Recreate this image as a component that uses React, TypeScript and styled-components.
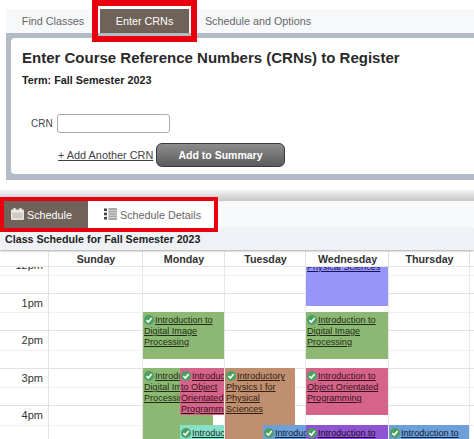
import styled, { createGlobalStyle } from "styled-components";

const GlobalStyle = createGlobalStyle`
  html, body {
    margin: 0;
    padding: 0;
    background: #fff;
    font-family: "Liberation Sans", Arial, sans-serif;
  }
`;

const Page = styled.div`
  position: relative;
  width: 474px;
  height: 439px;
  overflow: hidden;
`;

const Register = styled.section`
  padding: 9px 0 0 6px;
`;

const TabStrip = styled.nav`
  display: flex;
  height: 24px;
  background: #f7f8fa;
`;

const TopTab = styled.div<{ $active?: boolean; $width: number }>`
  width: ${(p) => p.$width}px;
  display: flex;
  align-items: center;
  justify-content: center;
  font-size: 10.8px;
  color: ${(p) => (p.$active ? "#fff" : "#666")};
  background: ${(p) => (p.$active ? "#6e6259" : "transparent")};
`;

const RedBox = styled.div<{ $x: number; $y: number; $w: number; $h: number; $b: number }>`
  position: absolute;
  left: ${(p) => p.$x}px;
  top: ${(p) => p.$y}px;
  width: ${(p) => p.$w}px;
  height: ${(p) => p.$h}px;
  box-sizing: border-box;
  border: ${(p) => p.$b}px solid #e8000f;
  pointer-events: none;
`;

const PanelFrame = styled.div`
  height: 147px;
  box-sizing: border-box;
  padding: 5px 0 6px 5px;
  background: #b3bcc6;
`;

const Panel = styled.div`
  height: 100%;
  box-sizing: border-box;
  padding: 11px 0 0 11px;
  background: #fff;
  border-radius: 4px 0 0 4px;
`;

const Heading = styled.h1`
  margin: 0;
  font-size: 15px;
  line-height: 18px;
  font-weight: 700;
  color: #2a2a2a;
`;

const Term = styled.div`
  margin-top: 6px;
  font-size: 10.8px;
  line-height: 14px;
  font-weight: 700;
  color: #222;
`;

const CrnRow = styled.div`
  display: flex;
  align-items: center;
  gap: 4px;
  margin-top: 27px;
  padding-left: 9px;
  font-size: 10px;
  color: #444;
`;

const CrnInput = styled.input`
  width: 113px;
  height: 19px;
  box-sizing: border-box;
  border: 1px solid #a9a9a9;
  border-radius: 3px;
  background: #fff;
`;

const ActionRow = styled.div`
  display: flex;
  align-items: center;
  gap: 3px;
  margin-top: 10px;
  padding-left: 36px;
`;

const AddLink = styled.a`
  width: 95px;
  font-size: 10.9px;
  white-space: nowrap;
  color: #444;
  text-decoration: underline;
`;

const SummaryButton = styled.button`
  width: 129px;
  height: 24px;
  padding: 0;
  border: 1px solid #3a3a3a;
  border-radius: 6px;
  background: linear-gradient(#8d8d8d, #5c5c5c);
  color: #fff;
  font-family: inherit;
  font-size: 10.5px;
  font-weight: 700;
`;

const Schedule = styled.section`
  margin-top: 10px;
`;

const ChromeBar = styled.div`
  height: 11px;
  background: linear-gradient(#f4f4f4, #c6c6c6);
`;

const ViewTabs = styled.nav`
  display: flex;
  height: 27px;
  padding-left: 4px;
  background: #f8f9fa;
`;

const ViewTab = styled.div<{ $active?: boolean; $width: number; $inset: number }>`
  width: ${(p) => p.$width}px;
  box-sizing: border-box;
  padding-left: ${(p) => p.$inset}px;
  display: flex;
  align-items: center;
  gap: 3px;
  font-size: 10.8px;
  color: ${(p) => (p.$active ? "#fff" : "#666")};
  background: ${(p) => (p.$active ? "#6e6259" : "#fff")};
  svg {
    margin-top: -2px;
  }
`;

const TitleBar = styled.div`
  height: 22px;
  box-sizing: border-box;
  padding: 4px 0 0 5px;
  background: #eef1f5;
  box-shadow: 0 1px 2px rgba(0, 0, 0, 0.35);
  position: relative;
  font-size: 10.7px;
  line-height: 14px;
  font-weight: 700;
  color: #222;
`;

const columns = "49px 94px 82px 81px 83px 81px 4px";

const DayHeader = styled.div`
  display: grid;
  grid-template-columns: ${columns};
  height: 15px;
  margin-top: 1px;
  border-bottom: 1px solid #e4e4e4;
`;

const DayName = styled.div`
  box-sizing: border-box;
  padding: 1px 0 0 1px;
  border-right: 1px solid #e2e2e2;
  text-align: center;
  font-size: 10.7px;
  line-height: 15px;
  font-weight: 700;
  color: #333;
`;

const Calendar = styled.div`
  position: relative;
  height: 173px;
  overflow: hidden;
`;

const HourRows = styled.div`
  margin-top: -11px;
`;

const HourRow = styled.div`
  display: grid;
  grid-template-columns: ${columns};
  height: 37.6px;
  box-sizing: border-box;
  border-bottom: 1px solid #e2e2e2;
  background: linear-gradient(#f0f0f0, #f0f0f0) 0 18.5px / 100% 1px no-repeat;
`;

const HourLabel = styled.div`
  box-sizing: border-box;
  padding: 2px 5px 0 0;
  border-right: 1px solid #e2e2e2;
  text-align: right;
  font-size: 11px;
  line-height: 14px;
  color: #333;
`;

const DayCell = styled.div`
  border-right: 1px solid #e8e8e8;
`;

const Event = styled.div<{ $x: number; $y: number; $w: number; $h: number; $bg: string; $ink: string; $z?: number }>`
  position: absolute;
  left: ${(p) => p.$x}px;
  top: ${(p) => p.$y - 266}px;
  width: ${(p) => p.$w}px;
  height: ${(p) => p.$h}px;
  z-index: ${(p) => p.$z ?? 1};
  overflow: hidden;
  box-sizing: border-box;
  padding: 3px 0 0 1px;
  background: ${(p) => p.$bg};
  color: ${(p) => p.$ink};
  font-size: 9.1px;
  line-height: 11px;
  white-space: nowrap;
  a {
    color: inherit;
    text-decoration: underline;
  }
  svg {
    vertical-align: -2px;
    margin-right: 1px;
  }
`;

const ClippedTitle = styled.a`
  display: block;
  margin-top: -8.5px;
`;

const Check = () => (
  <svg width="10" height="10" viewBox="0 0 10 10">
    <circle cx="5" cy="5" r="5" fill="#4b9f62" />
    <path d="M2.4 5.2 4.3 7 7.7 3" fill="none" stroke="#fff" strokeWidth="1.6" />
  </svg>
);

const CalendarIcon = () => (
  <svg width="13" height="12" viewBox="0 0 13 12">
    <rect x="0" y="1.5" width="13" height="10.5" rx="1" fill="#e9e5e0" />
    <rect x="1.5" y="4.5" width="10" height="6" fill="#cfc9c2" />
    <rect x="2.5" y="0" width="2" height="3" fill="#f4f2f0" />
    <rect x="8.5" y="0" width="2" height="3" fill="#f4f2f0" />
  </svg>
);

const DetailsIcon = () => (
  <svg width="13" height="12" viewBox="0 0 13 12">
    <rect x="0" y="0.5" width="3" height="2.6" fill="#444" />
    <rect x="0" y="4.7" width="3" height="2.6" fill="#444" />
    <rect x="0" y="8.9" width="3" height="2.6" fill="#444" />
    <rect x="4.5" y="0" width="8.5" height="12" fill="#a8a8a8" />
    <path d="M4.5 2.4h8.5M4.5 4.8h8.5M4.5 7.2h8.5M4.5 9.6h8.5" stroke="#e6e6e6" strokeWidth="0.7" />
  </svg>
);

const hours = ["12pm", "1pm", "2pm", "3pm", "4pm", "5pm"];

const events = [
  { x: 143, y: 311, w: 81, h: 47, bg: "#8db873", ink: "#1d2e14", lines: ["Introduction to", "Digital Image", "Processing"] },
  { x: 306, y: 311, w: 82, h: 47, bg: "#8db873", ink: "#1d2e14", lines: ["Introduction to", "Digital Image", "Processing"] },
  { x: 306, y: 367, w: 82, h: 47, bg: "#d6648a", ink: "#3a1020", lines: ["Introduction to", "Object Orientated", "Programming"] },
  { x: 143, y: 367, w: 70, h: 72, bg: "#8db873", ink: "#1d2e14", lines: ["Introduction to", "Digital Image", "Processing"] },
  { x: 180, y: 367, w: 44, h: 47, bg: "#d6648a", ink: "#3a1020", z: 2, lines: ["Introduction", "to Object", "Orientated", "Programming"] },
  { x: 180, y: 424, w: 44, h: 15, bg: "#86e0c8", ink: "#17352d", z: 2, lines: ["Introduction to"] },
  { x: 225, y: 367, w: 70, h: 72, bg: "#c08f6f", ink: "#33200f", lines: ["Introductory", "Physics I for", "Physical", "Sciences"] },
  { x: 263, y: 424, w: 43, h: 15, bg: "#6f9fd8", ink: "#10243d", z: 2, lines: ["Introduction to"] },
  { x: 306, y: 424, w: 82, h: 15, bg: "#8f55d0", ink: "#1d0c33", z: 2, lines: ["Introduction to"] },
  { x: 389, y: 424, w: 80, h: 15, bg: "#6f9fd8", ink: "#10243d", z: 2, lines: ["Introduction to"] },
];

const App = () => {
  return (
    <Page>
      <GlobalStyle />
      <Register>
        <TabStrip>
          <TopTab $width={94}>Find Classes</TopTab>
          <TopTab $active $width={89}>Enter CRNs</TopTab>
          <TopTab $width={138}>Schedule and Options</TopTab>
        </TabStrip>
        <PanelFrame>
          <Panel>
            <Heading>Enter Course Reference Numbers (CRNs) to Register</Heading>
            <Term>Term: Fall Semester 2023</Term>
            <CrnRow>
              <span>CRN</span>
              <CrnInput />
            </CrnRow>
            <ActionRow>
              <AddLink>+ Add Another CRN</AddLink>
              <SummaryButton>Add to Summary</SummaryButton>
            </ActionRow>
          </Panel>
        </PanelFrame>
      </Register>
      <RedBox $x={92} $y={0} $w={105} $h={42} $b={6} />

      <Schedule>
        <ChromeBar />
        <ViewTabs>
          <ViewTab $active $width={84} $inset={7}>
            <CalendarIcon />
            Schedule
          </ViewTab>
          <ViewTab $width={125} $inset={16}>
            <DetailsIcon />
            Schedule Details
          </ViewTab>
        </ViewTabs>
        <TitleBar>Class Schedule for Fall Semester 2023</TitleBar>
        <DayHeader>
          <DayName />
          <DayName>Sunday</DayName>
          <DayName>Monday</DayName>
          <DayName>Tuesday</DayName>
          <DayName>Wednesday</DayName>
          <DayName>Thursday</DayName>
        </DayHeader>
        <Calendar>
          <HourRows>
            {hours.map((h) => (
              <HourRow key={h}>
                <HourLabel>{h}</HourLabel>
                <DayCell />
                <DayCell />
                <DayCell />
                <DayCell />
                <DayCell />
              </HourRow>
            ))}
          </HourRows>
          <Event $x={306} $y={266} $w={82} $h={38.5} $bg="#9795f7" $ink="#14125c">
            <ClippedTitle>Physical Sciences</ClippedTitle>
          </Event>
          {events.map((e) => (
            <Event key={`${e.x}-${e.y}`} $x={e.x} $y={e.y} $w={e.w} $h={e.h} $bg={e.bg} $ink={e.ink} $z={e.z}>
              <Check />
              {e.lines.map((line, i) => (
                <span key={line}>
                  <a>{line}</a>
                  {i < e.lines.length - 1 && <br />}
                </span>
              ))}
            </Event>
          ))}
        </Calendar>
      </Schedule>
      <RedBox $x={0} $y={197} $w={218} $h={35} $b={4} />
    </Page>
  );
};

export default App;
